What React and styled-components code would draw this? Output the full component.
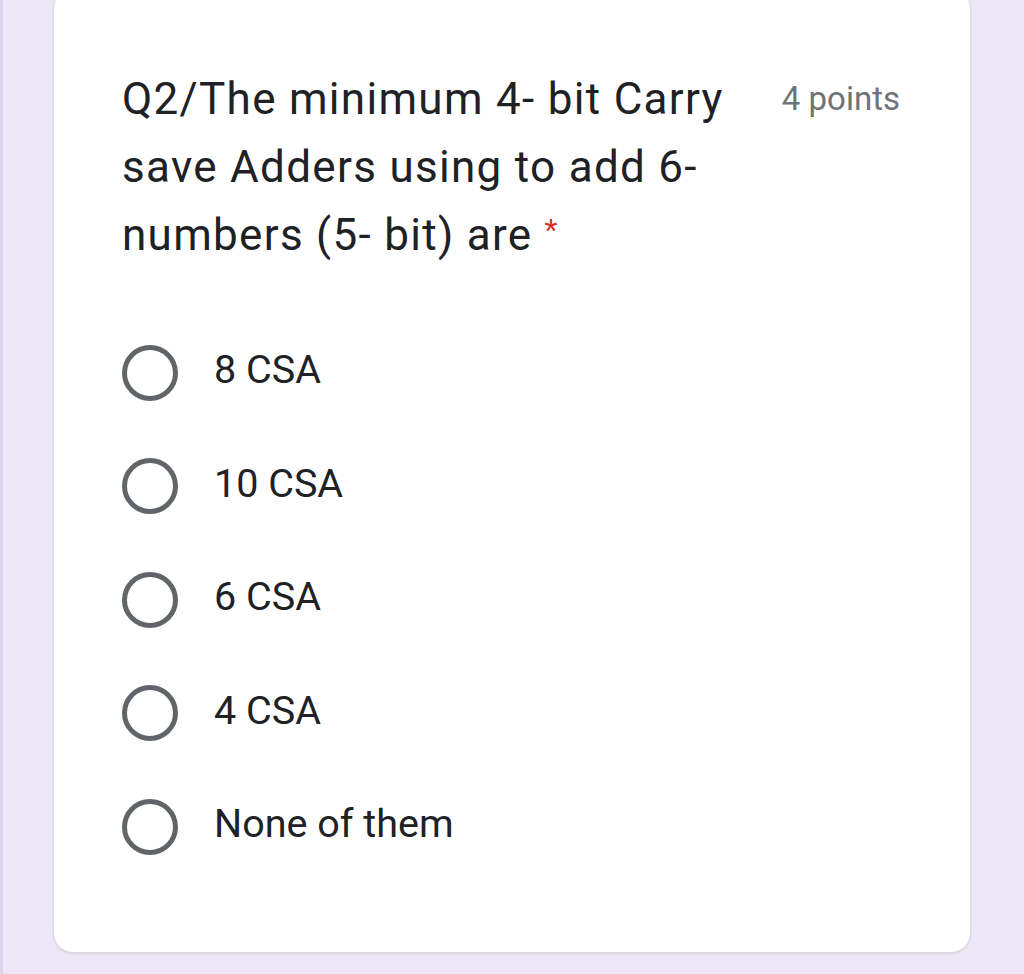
import React from "react";
import styled, { createGlobalStyle } from "styled-components";

const GlobalStyle = createGlobalStyle`
  html, body {
    margin: 0;
    padding: 0;
    background: #ede8f7;
  }
  body {
    font-family: Roboto, "Liberation Sans", Arial, sans-serif;
    overflow: hidden;
  }
`;

const Page = styled.div`
  min-height: 974px;
  box-sizing: border-box;
  background: #ede8f7;
  border-left: 3px solid #ddd6ee;
  padding: 0 50px 0 50px;
  overflow: hidden;
`;

const Card = styled.section`
  margin-top: -12px;
  width: 918px;
  box-sizing: border-box;
  background: #ffffff;
  border: 1.5px solid #dcdbe0;
  border-radius: 20px;
  box-shadow: 0 1px 2px rgba(60, 64, 67, 0.12);
  padding: 76px 70px 68px 68px;
`;

const Header = styled.div`
  display: flex;
  align-items: flex-start;
  gap: 46px;
`;

const Question = styled.h2`
  flex: 1;
  margin: 0;
  font-family: Roboto, "Liberation Sans", sans-serif;
  font-weight: 400;
  font-size: 44px;
  line-height: 68px;
  letter-spacing: 1.3px;
  color: #202124;
`;

const Required = styled.span`
  position: relative;
  top: 4px;
  display: inline-block;
  line-height: 30px;
  vertical-align: top;
  margin-top: 10px;
  color: #d93025;
  font-size: 30px;
  margin-left: 12px;
  letter-spacing: 0;
`;

const Points = styled.span`
  flex: none;
  font-family: Roboto, "Liberation Sans", sans-serif;
  font-size: 33px;
  line-height: 68px;
  color: #6f7276;
  letter-spacing: 0;
`;

const Options = styled.ul`
  list-style: none;
  margin: 47px 0 0 0;
  padding: 0;
  display: flex;
  flex-direction: column;
`;

const Option = styled.li`
  height: 113.5px;
  display: flex;
  align-items: center;
  gap: 36px;
`;

const Radio = styled.span`
  flex: none;
  width: 56px;
  height: 56px;
  box-sizing: border-box;
  border: 5px solid #616469;
  border-radius: 50%;
`;

const Label = styled.span`
  font-family: Roboto, "Liberation Sans", sans-serif;
  font-size: 39.5px;
  line-height: 48px;
  color: #202124;
  margin-bottom: 5px;
`;

const options = ["8 CSA", "10 CSA", "6 CSA", "4 CSA", "None of them"];

export default function App() {
  return (
    <>
      <GlobalStyle />
      <Page>
        <Card>
          <Header>
            <Question>
              Q2/The minimum 4- bit Carry save Adders using to add 6- numbers (5- bit) are
              <Required>*</Required>
            </Question>
            <Points>4 points</Points>
          </Header>
          <Options>
            {options.map((o) => (
              <Option key={o}>
                <Radio />
                <Label>{o}</Label>
              </Option>
            ))}
          </Options>
        </Card>
      </Page>
    </>
  );
}
